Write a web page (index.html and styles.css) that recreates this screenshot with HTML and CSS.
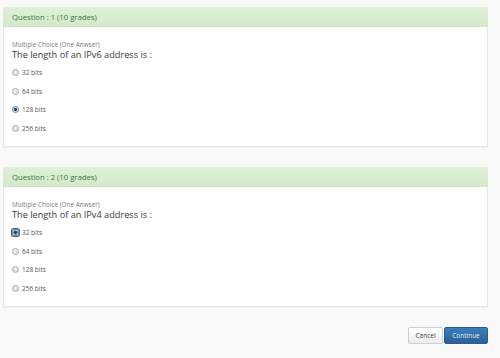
FILE: index.html
```html
<!DOCTYPE html>
<html>
<head>
<meta charset="utf-8">
<link rel="stylesheet" href="styles.css">
</head>
<body>
<div class="page">
  <div class="panel">
    <div class="panel-heading">Question : 1 (10 grades)</div>
    <div class="panel-body">
      <div class="qtype">Multiple Choice (One Anwser)</div>
      <div class="qtext">The length of an IPv6 address is :</div>
      <ul class="options">
        <li><label><input type="radio" name="q1"><span>32 bits</span></label></li>
        <li><label><input type="radio" name="q1"><span>64 bits</span></label></li>
        <li><label><input type="radio" name="q1" checked><span>128 bits</span></label></li>
        <li><label><input type="radio" name="q1"><span>256 bits</span></label></li>
      </ul>
    </div>
  </div>
  <div class="panel">
    <div class="panel-heading">Question : 2 (10 grades)</div>
    <div class="panel-body">
      <div class="qtype">Multiple Choice (One Anwser)</div>
      <div class="qtext">The length of an IPv4 address is :</div>
      <ul class="options">
        <li><label><input type="radio" name="q2" class="focused" checked><span>32 bits</span></label></li>
        <li><label><input type="radio" name="q2"><span>64 bits</span></label></li>
        <li><label><input type="radio" name="q2"><span>128 bits</span></label></li>
        <li><label><input type="radio" name="q2"><span>256 bits</span></label></li>
      </ul>
    </div>
  </div>
  <div class="actions">
    <button class="btn btn-default">Cancel</button>
    <button class="btn btn-primary">Continue</button>
  </div>
</div>
</body>
</html>
```

FILE: styles.css
```css
html, body {
  margin: 0;
  padding: 0;
  background: #f9f9f9;
}
body {
  font-family: "Open Sans", "Liberation Sans", sans-serif;
  color: #333;
}
.page {
  width: 485px;
  padding: 7px 0 0 3px;
}
.panel {
  background: #fff;
  border: 1px solid #e6e9e1;
  border-top: none;
  height: 140px;
  box-sizing: border-box;
  margin-bottom: 20px;
  box-shadow: 0 1px 1px rgba(0,0,0,0.03);
}
.panel-heading {
  height: 20px;
  box-sizing: border-box;
  background: linear-gradient(#dff0d8, #d4e9cb);
  border-bottom: 1px solid #cfe5c5;
  margin: 0 -1px;
  padding-left: 9px;
  color: #3c763d;
  font-size: 7.7px;
  line-height: 20px;
}
.panel-body {
  padding: 14px 8px 0 8px;
}
.qtype {
  font-size: 6.4px;
  line-height: 8px;
  color: #7a7a7a;
}
.qtext {
  font-size: 9.2px;
  line-height: 11px;
  color: #3a3a3a;
}
.options {
  list-style: none;
  margin: 8px 0 0 0;
  padding: 0;
  display: flex;
  flex-direction: column;
  gap: 9.7px;
}
.options li {
  height: 9px;
}
.options label {
  display: flex;
  align-items: center;
  gap: 3px;
  height: 9px;
  font-size: 6.5px;
  color: #555;
}
.options input {
  appearance: none;
  -webkit-appearance: none;
  margin: 0;
  width: 7px;
  height: 7px;
  border: 1px solid #acacac;
  border-radius: 50%;
  background: radial-gradient(circle at 50% 40%, #f4f4f4, #d2d2d2);
  box-sizing: border-box;
  flex: none;
}
.options input:checked {
  border-color: #6d8094;
  background: radial-gradient(circle, #17496f 0 32%, #5f88ad 42%, #dbe5ee 60%);
}
.options input.focused {
  outline: 1px solid #4f6f8e;
  outline-offset: 0;
  border-radius: 1px;
  background: radial-gradient(circle, #17496f 0 30%, #3f79a8 45%, #c9d9e8 75%);
}
.actions {
  display: flex;
  justify-content: flex-end;
  gap: 1px;
  margin-top: 10px;
}
.btn {
  height: 17px;
  box-sizing: border-box;
  font-family: "Open Sans", "Liberation Sans", sans-serif;
  font-size: 6.5px;
  padding: 0;
  border-radius: 2px;
  cursor: pointer;
}
.btn-default {
  width: 35px;
  background: linear-gradient(#ffffff, #ececec);
  border: 1px solid #cfcfcf;
  color: #444;
}
.btn-primary {
  width: 44px;
  background: linear-gradient(#3a7dba, #2a6198);
  border: 1px solid #2a5d8f;
  color: #e6eef6;
}
```
